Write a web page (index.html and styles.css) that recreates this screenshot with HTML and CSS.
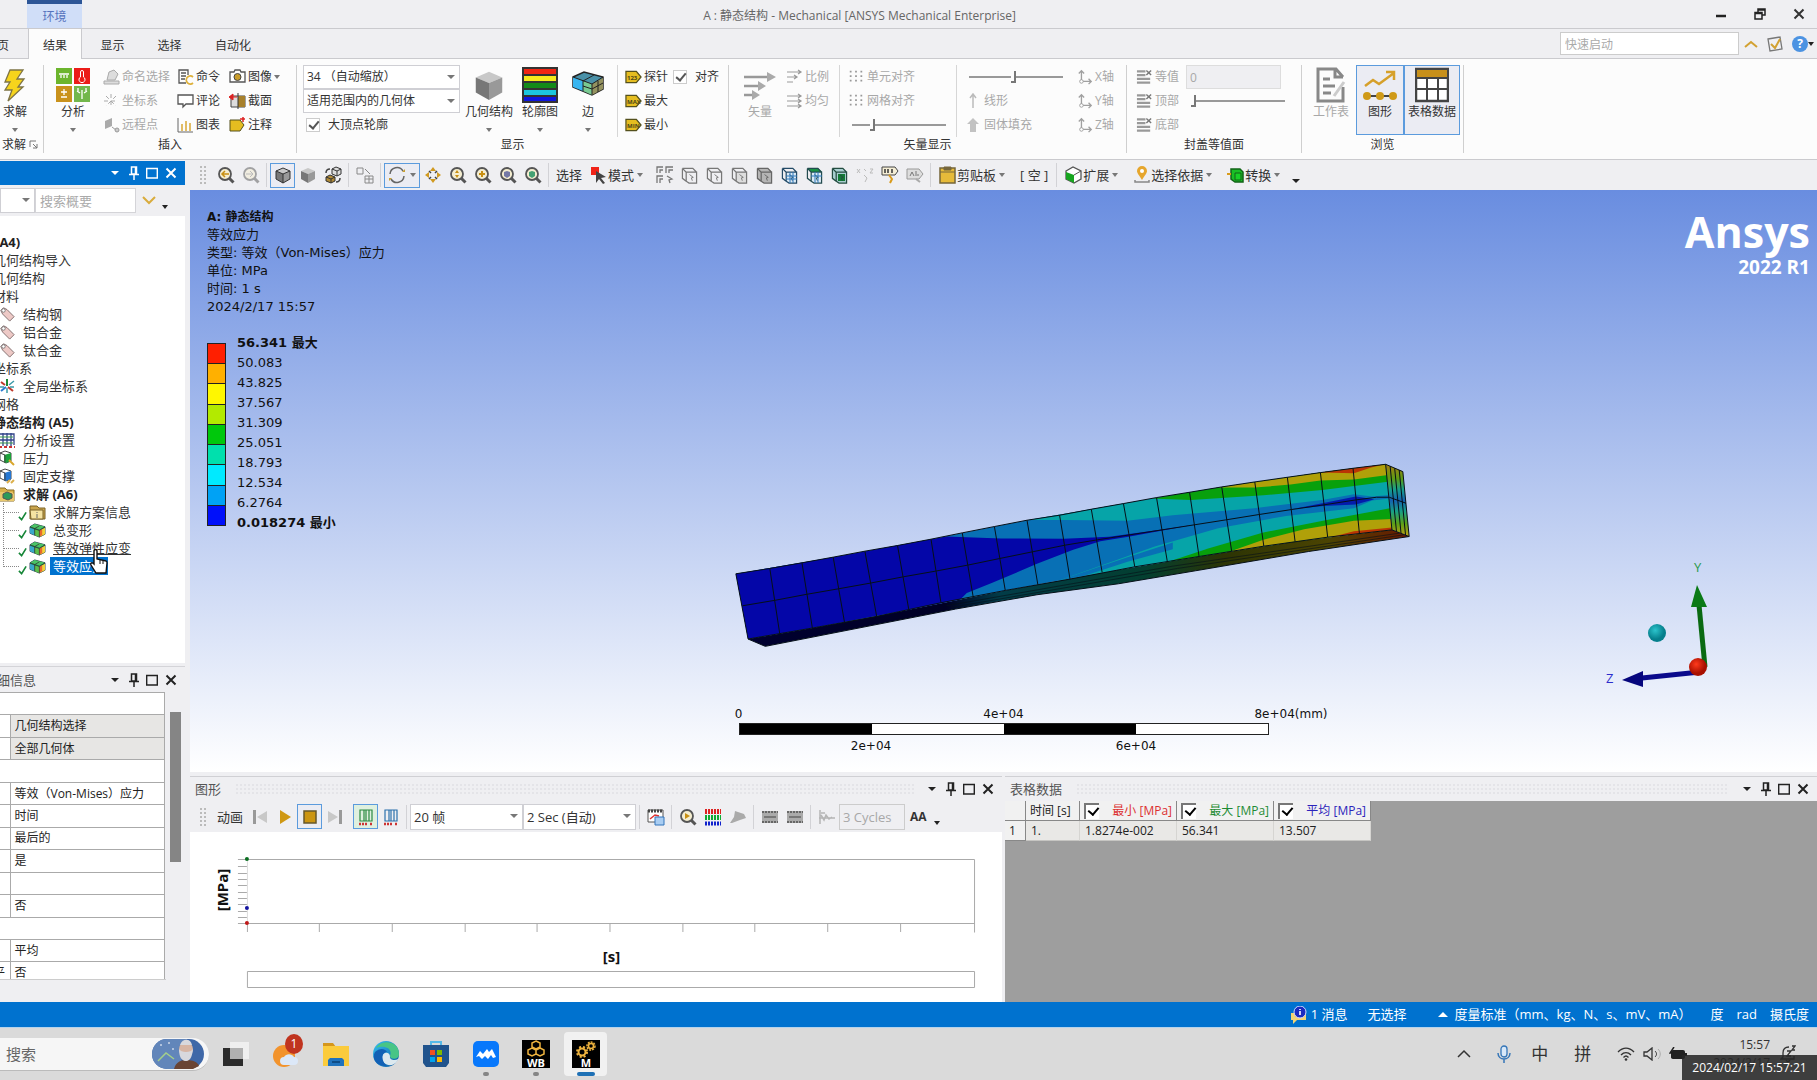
FILE: index.html
```html
<!DOCTYPE html>
<html lang="zh-CN">
<head>
    <meta charset="UTF-8">
    <meta name="viewport" content="width=device-width, initial-scale=1.0">
    <title>A : 静态结构 - Mechanical</title>
    <link rel="stylesheet" href="styles.css">
</head>
<body>
    <!-- shared icon shapes -->
    <svg class="defs" aria-hidden="true">
        <defs>
            <linearGradient id="gEdge" x1="0" y1="0" x2="1" y2="1"><stop offset="0" stop-color="#35c1f1"/><stop offset="1" stop-color="#0c59a4"/></linearGradient>
            <radialGradient id="gCyan" cx=".4" cy=".35"><stop offset="0" stop-color="#2cc4cc"/><stop offset="1" stop-color="#057f8c"/></radialGradient>
            <radialGradient id="gRed" cx=".4" cy=".35"><stop offset="0" stop-color="#ff3a1c"/><stop offset="1" stop-color="#a80f00"/></radialGradient>
            <symbol id="pin" viewBox="0 0 10 14"><path d="M2.5 1h5v7h-5zM6.5 1v7M0 8.500h10M5 9v5" fill="none" stroke="currentColor" stroke-width="1.500"/></symbol>
            <symbol id="max" viewBox="0 0 12 12"><path d="M.7 1.500h10.600v9.500H.7z" fill="none" stroke="currentColor" stroke-width="1.400"/></symbol>
            <symbol id="close" viewBox="0 0 12 12"><path d="M1.500 1.500l9 9M10.500 1.500l-9 9" stroke="currentColor" stroke-width="2"/></symbol>
            <symbol id="lens" viewBox="0 0 18 18"><path d="M12 12l4.500 4.500" stroke="#555" stroke-width="3"/><circle cx="8" cy="8" r="6" fill="#f4edd0" stroke="#555" stroke-width="1.800"/></symbol>
            <symbol id="cube" viewBox="0 0 18 18"><path d="M2 5l7-3 7 3-7 3z" fill="#c8c8c8"/><path d="M2 5l7 3v9l-7-4z" fill="#777"/><path d="M16 5l-7 3v9l7-4z" fill="#999"/></symbol>
            <symbol id="wire" viewBox="0 0 18 18"><path d="M5.500 5.500h11V17h-8l-3-2zM1.500 1.500h11l4 4M1.500 1.500l4 4M1.500 1.500V12l4 3" fill="none" stroke="currentColor" stroke-width="1.300"/><path d="M9 8l4 3-2 .5 1 3" fill="none" stroke="currentColor"/></symbol>
            <symbol id="tag" viewBox="0 0 18 14"><path d="M1 1h11l5 6-5 6H1z" fill="#e5bd20" stroke="#54501d" stroke-width="1.300"/></symbol>
            <symbol id="tagpink" viewBox="0 0 18 18"><path d="M2 5l3-3 4 2 8 8-5 5-8-8z" fill="#edc9c6" stroke="#796464"/><circle cx="5" cy="5" r="2" fill="#fff" stroke="#777"/></symbol>
            <symbol id="result" viewBox="0 0 18 16"><path d="M1 4l5-3 11 3v8l-6 3-10-4z" fill="#198c53" stroke="#345"/><path d="M1 5l5 2v6l-5-2z" fill="#39a8cb"/><path d="M6 7l5 1v7l-5-2z" fill="#5cc04a"/><path d="M11 8l6-3v7l-6 3z" fill="#f0d33a"/><path d="M11 8l3-1.500V13l-3 1.500z" fill="#e8692e"/><path d="M1 4l5-3 11 3-6 3z" fill="#4ac465"/><path d="M6 6v7M1 4l10 4 6-4M11 8v7M6 6l5-3" fill="none" stroke="#333" stroke-width=".8"/></symbol>
            <symbol id="tick" viewBox="0 0 10 10"><path d="M1 6l3 3 5-8" fill="none" stroke="#168637" stroke-width="1.800"/></symbol>
            <symbol id="iso" viewBox="0 0 18 16"><path d="M1 2h9M1 6h9M1 10h14M1 14h14" stroke="#999" stroke-width="2.500"/><path d="M11 1l5 5M16 1l-5 5" stroke="#777" stroke-width="1.500"/></symbol>
            <symbol id="axis" viewBox="0 0 18 18"><path d="M5 14V2M2 5l3-3 3 3M6 14h10M13 11l3 3-3 3" fill="none" stroke="#a0a0a0" stroke-width="1.500"/><circle cx="5" cy="14" r="2" fill="#fff" stroke="#999"/></symbol>
            <symbol id="dots" viewBox="0 0 18 18"><path d="M2 3h2M8 3h2M14 3h2M2 8h2M8 8h2M14 8h2M2 13h2M8 13h2M14 13h2" stroke="#999" stroke-width="2"/></symbol>
            <symbol id="film" viewBox="0 0 18 16"><path d="M1 2h16v12H1z" fill="#aaa"/><path d="M1 3h16M1 13h16" stroke="#666" stroke-width="2" stroke-dasharray="2 1"/><path d="M3 8h12" stroke="#666" stroke-width="1.500"/></symbol>
            <symbol id="mesh" viewBox="0 0 18 18"><path d="M3 2h12v11H3zM7 2v11M9 2v11M12 2v11" fill="none" stroke="currentColor" stroke-width="1.200"/><path d="M2 16h9M13 16h3" stroke="#c33" stroke-width="2.500" stroke-dasharray="2 1"/></symbol>
        </defs>
    </svg>

    <header class="titlebar">
        <div class="context-tab">环境</div>
        <div class="title">A : 静态结构 - Mechanical [ANSYS Mechanical Enterprise]</div>
        <div class="window-buttons">
            <button type="button" aria-label="最小化"><svg width="12" height="12" viewBox="0 0 12 12"><path d="M1 8h10" stroke="#222" stroke-width="2.500"/></svg></button>
            <button type="button" aria-label="还原"><svg width="12" height="12" viewBox="0 0 12 12"><path d="M4 4V1h7v6H8M1 4.500h7v6.500H1zM1 5.500h7M4 2h7" fill="none" stroke="#222" stroke-width="1.500"/></svg></button>
            <button type="button" aria-label="关闭"><svg width="12" height="12"><use href="#close"/></svg></button>
        </div>
    </header>

    <nav class="tabs">
        <button type="button" class="tab tab-home">主页</button>
        <button type="button" class="tab tab-on">结果</button>
        <button type="button" class="tab">显示</button>
        <button type="button" class="tab">选择</button>
        <button type="button" class="tab">自动化</button>
        <div class="quick">
            <input type="text" class="quick-input" placeholder="快速启动" aria-label="快速启动">
            <button type="button" aria-label="折叠"><svg width="14" height="10" viewBox="0 0 14 10"><path d="M1 8l6-5 6 5" fill="none" stroke="#d2a132" stroke-width="2"/></svg></button>
            <button type="button" aria-label="选项"><svg width="16" height="16" viewBox="0 0 16 16"><path d="M1 3l12-2 2 12-12 2z" fill="none" stroke="#777" stroke-width="1.300"/><path d="M4 8l4 4 5-9" fill="none" stroke="#d2a132" stroke-width="2"/></svg></button>
            <button type="button" aria-label="帮助" class="help"><span>?</span><i class="caret dark"></i></button>
        </div>
    </nav>

    <section class="ribbon">
        <div class="group g-solve">
            <div class="group-body">
                <button type="button" class="big"><svg width="30" height="34" viewBox="0 0 30 34"><path d="M10 2h13l-6 9h7l-6 8h5L8 33l4-11H5l5-8H5z" fill="#f6d41c" stroke="#7e7446" stroke-width="1.300"/></svg>求解<i class="caret"></i></button>
            </div>
            <div class="group-name">求解 <svg width="9" height="9" viewBox="0 0 9 9"><path d="M1 7V1h6M4 4l4 4M8 4v4H4" fill="none" stroke="#777"/></svg></div>
        </div>

        <div class="group g-insert">
            <div class="group-body">
                <button type="button" class="big analyze"><svg width="34" height="34" viewBox="0 0 34 34"><path d="M0 0h16v16H0z" fill="#6cb52d"/><path d="M18 0h16v16H18z" fill="#eb1c18"/><path d="M0 18h16v16H0z" fill="#c9921c"/><path d="M18 18h16v16H18z" fill="#72b74b"/><path d="M3 6h10M5 7v3M8 7v3M11 7v3M5 24h6M8 21v6M5 29h6M21 23l3 2M31 23l-3 2M26 22v9M22 20v3M30 20v3" stroke="#fff" stroke-width="1.300"/><path d="M24.500 9V4a1.500 1.500 0 0 1 3 0v5a3 3 0 1 1-3 0z" fill="none" stroke="#fff"/></svg>分析<i class="caret"></i></button>
                <div class="stack off w74">
                    <button type="button"><svg width="17" height="16" viewBox="0 0 17 16"><path d="M1 12h15v3H1zM4 11l2-8 5-2 4 4-3 6z" fill="#ddd" stroke="#aaa"/></svg>命名选择</button>
                    <button type="button"><svg width="17" height="16" viewBox="0 0 17 16"><path d="M8 1v14M1 8h14M3 3l10 10M13 3L3 13" stroke="#aaa" stroke-dasharray="4 3"/></svg>坐标系</button>
                    <button type="button"><svg width="17" height="16" viewBox="0 0 17 16"><path d="M2 4l7-3v8l-7 3z" fill="#aaa"/><path d="M9 10l4 3" stroke="#999"/><circle cx="14" cy="13" r="2" fill="#ccc" stroke="#999"/></svg>远程点</button>
                </div>
                <div class="stack w52">
                    <button type="button"><svg width="17" height="16" viewBox="0 0 17 16"><path d="M9 14H2V1h9v5M4 4h5M4 7h5M4 10h4" fill="none" stroke="#555" stroke-width="1.300"/><path d="M16 8a4 4 0 1 0 0 6" fill="none" stroke="#deb13b" stroke-width="1.800"/></svg>命令</button>
                    <button type="button"><svg width="17" height="16" viewBox="0 0 17 16"><path d="M1 2h15v9H9l-3 3v-3H1z" fill="#fff" stroke="#555" stroke-width="1.300"/></svg>评论</button>
                    <button type="button"><svg width="17" height="16" viewBox="0 0 17 16"><path d="M1 1v14h15" fill="none" stroke="#666"/><path d="M5 14V7M9 14V4M13 14V6" stroke="#d7a735" stroke-width="1.500"/></svg>图表</button>
                </div>
                <div class="stack w60">
                    <button type="button"><svg width="17" height="16" viewBox="0 0 17 16"><path d="M1 3h4l1-2h5l1 2h4v10H1z" fill="#fff" stroke="#555" stroke-width="1.300"/><circle cx="8.500" cy="8" r="3.500" fill="#c99d2b" stroke="#444"/></svg>图像<i class="caret"></i></button>
                    <button type="button"><svg width="17" height="16" viewBox="0 0 17 16"><path d="M2 3h14v11H2z" fill="#ddd" stroke="#444"/><path d="M9 3h7v11H9z" fill="#a7802b"/><path d="M9 0v16" stroke="#333"/><path d="M0 4l4-3v6zM4 4h4" fill="#d22" stroke="#d22"/></svg>截面</button>
                    <button type="button"><svg width="17" height="16" viewBox="0 0 17 16"><path d="M1 3h10l4 5-4 6H1z" fill="#e5bd20" stroke="#54501d"/><path d="M14 0v5M11 2h5" stroke="#d22" stroke-width="1.500"/></svg>注释</button>
                </div>
            </div>
            <div class="group-name">插入</div>
        </div>

        <div class="group g-show">
            <div class="group-body">
                <div class="stack w160">
                    <span class="select"><select aria-label="缩放"><option>34 （自动缩放）</option></select></span>
                    <span class="select"><select aria-label="范围"><option>适用范围内的几何体</option></select></span>
                    <label class="check"><input type="checkbox" checked>大顶点轮廓</label>
                </div>
                <button type="button" class="big w50"><svg width="34" height="34" viewBox="0 0 18 18"><use href="#cube"/></svg>几何结构<i class="caret"></i></button>
                <button type="button" class="big w50"><svg width="36" height="36" viewBox="0 0 36 36"><path d="M0 0h36v36H0z" fill="#333"/><path d="M2 2h32v5H2z" fill="#f22613"/><path d="M2 9h32v5H2z" fill="#f7ea1c"/><path d="M2 16h32v5H2z" fill="#138a18"/><path d="M2 23h32v5H2z" fill="#1cc7df"/><path d="M2 30h32v4H2z" fill="#1016dd"/></svg>轮廓图<i class="caret"></i></button>
                <button type="button" class="big w44"><svg width="34" height="34" viewBox="0 0 34 34"><path d="M2 9l11-5 19 5v12l-11 6L2 19z" fill="#4a91a8" stroke="#222" stroke-width="1.500"/><path d="M2 9l10 4v10L2 19z" fill="#38b5f0"/><path d="M12 13l9 3v11l-9-4z" fill="#79ca92"/><path d="M21 16l11-6v11l-11 6z" fill="#94925f"/><path d="M2 9l19 7 11-7M12 13v10M21 16v11M12 13l11-6M27 13v11M12 18l9 3 11-6" fill="none" stroke="#222"/></svg>边<i class="caret"></i></button>
                <div class="divider"></div>
                <div class="stack w46">
                    <button type="button"><svg width="17" height="14"><use href="#tag"/><text x="2" y="10" class="tag-text">123</text></svg>探针</button>
                    <button type="button"><svg width="17" height="14"><use href="#tag"/><text x="2" y="10" class="tag-text">MAX</text></svg>最大</button>
                    <button type="button"><svg width="17" height="14"><use href="#tag"/><text x="2" y="10" class="tag-text">MIN</text></svg>最小</button>
                </div>
                <div class="stack"><label class="check near"><input type="checkbox" checked>对齐</label></div>
            </div>
            <div class="group-name">显示</div>
        </div>

        <div class="group g-vector off">
            <div class="group-body">
                <button type="button" class="big w50"><svg width="32" height="34" viewBox="0 0 32 34"><path d="M0 9h24M0 18h14M0 27h8" stroke="#999" stroke-width="2.500"/><path d="M23 4l9 5-9 5zM14 13l8 5-8 5zM8 22l8 5-8 5z" fill="#aaa"/></svg>矢量</button>
                <div class="stack w46">
                    <button type="button"><svg width="17" height="16" viewBox="0 0 17 16"><path d="M1 3h14M12 1l3 2-3 2M1 8h10M8 6l3 2-3 2M1 13h6" fill="none" stroke="#999" stroke-width="1.200"/></svg>比例</button>
                    <button type="button"><svg width="17" height="16" viewBox="0 0 17 16"><path d="M1 3h14M12 1l3 2-3 2M1 8h14M12 6l3 2-3 2M1 13h14M12 11l3 2-3 2" fill="none" stroke="#999" stroke-width="1.200"/></svg>均匀</button>
                </div>
                <div class="divider"></div>
                <div class="stack w102">
                    <button type="button"><svg width="18" height="16"><use href="#dots"/></svg>单元对齐</button>
                    <button type="button"><svg width="18" height="16"><use href="#dots"/></svg>网格对齐</button>
                    <input type="range" aria-label="矢量密度" min="0" max="100" value="20">
                </div>
                <div class="divider"></div>
                <div class="stack w112">
                    <input type="range" aria-label="矢量长度" min="0" max="100" value="47">
                    <button type="button"><svg width="18" height="16" viewBox="0 0 18 16"><path d="M9 15V2M6 5l3-4 3 4" fill="none" stroke="#bbb" stroke-width="1.500"/></svg>线形</button>
                    <button type="button"><svg width="18" height="16" viewBox="0 0 18 16"><path d="M9 1l6 6h-3v8H6V7H3z" fill="#c2c2c2"/></svg>固体填充</button>
                </div>
                <div class="stack">
                    <button type="button"><svg width="16" height="18"><use href="#axis"/></svg>X轴</button>
                    <button type="button"><svg width="16" height="18"><use href="#axis"/></svg>Y轴</button>
                    <button type="button"><svg width="16" height="18"><use href="#axis"/></svg>Z轴</button>
                </div>
            </div>
            <div class="group-name">矢量显示</div>
        </div>

        <div class="group g-iso off">
            <div class="group-body">
                <div class="stack w50">
                    <button type="button"><svg width="17" height="16"><use href="#iso"/></svg>等值</button>
                    <button type="button"><svg width="17" height="16"><use href="#iso"/></svg>顶部</button>
                    <button type="button"><svg width="17" height="16"><use href="#iso"/></svg>底部</button>
                </div>
                <div class="stack w104">
                    <input type="text" class="iso-value" value="0" aria-label="等值" disabled>
                    <input type="range" aria-label="等值位置" min="0" max="100" value="0">
                </div>
            </div>
            <div class="group-name">封盖等值面</div>
        </div>

        <div class="group g-browse">
            <div class="group-body">
                <button type="button" class="big w50 off"><svg width="34" height="36" viewBox="0 0 34 36"><path d="M29 20v14H4V2h18l7 8M21 2v8h8M9 12h7M9 19h12M9 26h8" fill="none" stroke="#888" stroke-width="3"/><path d="M20 29l10-14" stroke="#ccc" stroke-width="3"/></svg>工作表</button>
                <button type="button" class="big w48 picked"><svg width="34" height="36" viewBox="0 0 34 36"><path d="M2 19l8-6 6 4L31 6M23 5h8v8" fill="none" stroke="#d6a02a" stroke-width="2.500"/><path d="M3 29h28" stroke="#444" stroke-width="2"/><g fill="#cf9a18"><circle cx="4" cy="29" r="4"/><circle cx="17" cy="29" r="4"/><circle cx="30" cy="29" r="4"/></g></svg>图形</button>
                <button type="button" class="big w56 picked"><svg width="34" height="36" viewBox="0 0 34 36"><path d="M1 2h32v32H1z" fill="#fff" stroke="#444" stroke-width="2.500"/><path d="M2 3h30v7H2z" fill="#c8901a"/><path d="M1 11h32M1 22h32M12 11v23M23 11v23" stroke="#444" stroke-width="2"/></svg>表格数据</button>
            </div>
            <div class="group-name">浏览</div>
        </div>
    </section>

    <main class="work">
        <aside class="side">
            <div class="caption caption-blue">
                <span class="caption-tools"><i class="caret"></i><svg width="10" height="14"><use href="#pin"/></svg><svg width="12" height="12"><use href="#max"/></svg><svg width="12" height="12"><use href="#close"/></svg></span>
            </div>
            <div class="finder">
                <span class="select finder-select"><select aria-label="筛选"><option></option></select></span>
                <input type="text" class="finder-input" placeholder="搜索概要" aria-label="搜索概要">
                <svg width="14" height="9" viewBox="0 0 14 9"><path d="M1 1l6 6 6-6" fill="none" stroke="#d9ac3d" stroke-width="2"/></svg>
                <i class="caret dark low"></i>
            </div>
            <div class="tree">
                <div class="node top bold brief">(A4)</div>
                <div class="node top">几何结构导入</div>
                <div class="node top">几何结构</div>
                <div class="node top">材料</div>
                <div class="node"><svg width="16" height="16"><use href="#tagpink"/></svg>结构钢</div>
                <div class="node"><svg width="16" height="16"><use href="#tagpink"/></svg>铝合金</div>
                <div class="node"><svg width="16" height="16"><use href="#tagpink"/></svg>钛合金</div>
                <div class="node top">坐标系</div>
                <div class="node"><svg width="16" height="16" viewBox="0 0 16 16"><path d="M8 8V1" stroke="#1a8a35" stroke-width="2"/><path d="M9 9l5 4M2 4l4 3" stroke="#c0392b" stroke-width="2"/><path d="M7 9l-5 4" stroke="#2a7ad0" stroke-width="2"/><path d="M10 7l5-4M8 10v5M1 9h4M11 9h4" stroke="#3a9aa8" stroke-width="1.500"/></svg>全局坐标系</div>
                <div class="node top">网格</div>
                <div class="node top bold">静态结构 (A5)</div>
                <div class="node"><svg width="16" height="16" viewBox="0 0 16 16"><path d="M1 2h14v11M4 1v13M8 1v13M12 1v13M1 8h14" fill="none" stroke="#33468a" stroke-width="1.300"/><path d="M1 5h13M1 11h13" stroke="#3a9a4a"/><path d="M0 15h16" stroke="#c33" stroke-width="2" stroke-dasharray="3 2"/></svg>分析设置</div>
                <div class="node"><svg width="16" height="16" viewBox="0 0 16 16"><path d="M1 3l5-2 6 2v8l-5 2-6-3z" fill="#fff" stroke="#444"/><path d="M5 5l7-2v8l-5 2-2-1z" fill="#1ca33a"/><path d="M1 3l5 2v8" fill="none" stroke="#444"/><path d="M15 15l-5-5" stroke="#d9a62b" stroke-width="2"/></svg>压力</div>
                <div class="node"><svg width="16" height="16" viewBox="0 0 16 16"><path d="M1 3l5-2 6 2v8l-5 2-6-3z" fill="#fff" stroke="#444"/><path d="M5 5l7-2v8l-5 2-2-1z" fill="#2577d2"/><path d="M1 3l5 2v8" fill="none" stroke="#444"/><path d="M8 15l3-3M12 15l3-3" stroke="#dcb04c" stroke-width="2"/></svg>固定支撑</div>
                <div class="node bold"><svg width="16" height="16" viewBox="0 0 16 16"><path d="M0 2h6l2 2h7v11H0z" fill="#d9b04a" stroke="#8a6d22"/><path d="M0 6h13l2 2v7H0z" fill="#e9c96e"/><path d="M4 8l4-2 5 2v4l-4 2-5-2z" fill="#2c9a5a" stroke="#555"/></svg>求解 (A6)</div>
                <div class="leaves">
                    <div class="node leaf"><svg class="ok" width="9" height="10"><use href="#tick"/></svg><svg width="17" height="16" viewBox="0 0 17 16"><path d="M1 2h7l2 2h6v11H1z" fill="#c9a54d" stroke="#7a6228"/><path d="M1 6h13v9H2z" fill="#f5e3a2" stroke="#7a6228"/><path d="M8 8v1M8 10v4" stroke="#666"/></svg>求解方案信息</div>
                    <div class="node leaf"><svg class="ok" width="9" height="10"><use href="#tick"/></svg><svg width="17" height="15"><use href="#result"/></svg>总变形</div>
                    <div class="node leaf"><svg class="ok" width="9" height="10"><use href="#tick"/></svg><svg width="17" height="15"><use href="#result"/></svg><span class="hot">等效弹性应变</span></div>
                    <div class="node leaf"><svg class="ok" width="9" height="10"><use href="#tick"/></svg><svg width="17" height="15"><use href="#result"/></svg><span class="selected">等效应力</span></div>
                    <svg class="hand" width="18" height="25" viewBox="0 0 18 25"><path d="M4 2c0-2 3-2 3 0v8l9 2c1 0 1 1 1 2l-1 10H6L1 16c-1-2 1-3 3-1z" fill="#fff" stroke="#111" stroke-width="1.400"/><path d="M10 11v4M13 12v3" stroke="#111"/></svg>
                </div>
            </div>
            <div class="caption caption-details">
                <span class="caption-name clipped">详细信息</span>
                <span class="caption-tools"><i class="caret dark"></i><svg width="10" height="14"><use href="#pin"/></svg><svg width="12" height="12"><use href="#max"/></svg><svg width="12" height="12"><use href="#close"/></svg></span>
            </div>
            <div class="details">
                <div class="details-view">
                    <table class="props">
                        <colgroup><col class="key"><col></colgroup>
                        <tr><td colspan="2"></td></tr>
                        <tr><td></td><td class="gray">几何结构选择</td></tr>
                        <tr><td></td><td class="gray">全部几何体</td></tr>
                        <tr><td colspan="2"></td></tr>
                        <tr><td></td><td>等效（Von-Mises）应力</td></tr>
                        <tr><td></td><td>时间</td></tr>
                        <tr><td></td><td>最后的</td></tr>
                        <tr><td></td><td>是</td></tr>
                        <tr><td></td><td></td></tr>
                        <tr><td></td><td>否</td></tr>
                        <tr><td colspan="2"></td></tr>
                        <tr><td></td><td>平均</td></tr>
                        <tr><td class="cut">平</td><td>否</td></tr>
                    </table>
                </div>
                <div class="scroll"><div class="thumb"></div></div>
            </div>
        </aside>

        <section class="stage">
            <div class="toolbar">
                <i class="grip"></i>
                <button type="button" class="tool" aria-label="上一视图"><svg width="18" height="18"><use href="#lens"/><path d="M12 8H5M8 5L5 8l3 3" fill="none" stroke="#c88f12" stroke-width="1.500"/></svg></button>
                <button type="button" class="tool off" aria-label="下一视图"><svg width="18" height="18" opacity=".5"><use href="#lens"/><path d="M4 8h7M8 5l3 3-3 3" fill="none" stroke="#888"/></svg></button>
                <i class="bar"></i>
                <button type="button" class="tool picked" aria-label="带边着色"><svg width="18" height="18"><use href="#cube"/><path d="M2 5l7-3 7 3-7 3zM2 5v8l7 4 7-4V5M9 8v9" fill="none" stroke="#333"/></svg></button>
                <button type="button" class="tool" aria-label="着色"><svg width="18" height="18"><use href="#cube"/></svg></button>
                <button type="button" class="tool" aria-label="旋转模型"><svg width="18" height="18" viewBox="0 0 18 18"><path d="M8 3l4-2 5 2v5l-4 2-5-2z" fill="#ddd" stroke="#333"/><path d="M2 11l4-2 5 2v4l-4 2-5-2z" fill="#b08a36" stroke="#333"/><path d="M8 3l5 2v5M13 5l4-2M2 11l5 2v4M7 13l4-2" fill="none" stroke="#333"/><path d="M2 7c0-3 2-4 4-4M16 12c0 3-2 4-4 4" fill="none" stroke="#444" stroke-width="1.500"/></svg></button>
                <i class="bar"></i>
                <button type="button" class="tool" aria-label="框选"><svg width="18" height="18" viewBox="0 0 18 18"><path d="M1 2h6v6H1zM9 10h8v7H9zM13 10v7M9 13h8M9 3l5 5" fill="none" stroke="#888"/></svg></button>
                <i class="bar"></i>
                <button type="button" class="tool picked wide" aria-label="旋转"><svg width="18" height="18" viewBox="0 0 18 18"><path d="M2 8a7 7 0 0 1 13-3M16 10a7 7 0 0 1-13 3" fill="none" stroke="#666" stroke-width="1.500"/><path d="M14 6h3V3zM4 12H1v3z" fill="#c9a032"/></svg><i class="caret"></i></button>
                <button type="button" class="tool" aria-label="平移"><svg width="18" height="18" viewBox="0 0 18 18"><g fill="#d19a20"><path d="M9 1l3 4H6zM9 17l3-4H6zM1 9l4-3v6zM17 9l-4-3v6z"/></g><path d="M5 5l2 2M13 5l-2 2M5 13l2-2M13 13l-2-2" stroke="#444" stroke-width="1.500"/></svg></button>
                <button type="button" class="tool" aria-label="缩放"><svg width="18" height="18"><use href="#lens"/><path d="M8 4l2 3H6zM8 12l2-3H6z" fill="#c88f12"/></svg></button>
                <button type="button" class="tool" aria-label="放大"><svg width="18" height="18"><use href="#lens"/><path d="M8 5v6M5 8h6" stroke="#c88f12" stroke-width="2"/></svg></button>
                <button type="button" class="tool" aria-label="适应窗口"><svg width="18" height="18"><use href="#lens"/><path d="M5 6l3-1 3 1v4l-3 2-3-2z" fill="#7579a5"/></svg></button>
                <button type="button" class="tool" aria-label="适应所选"><svg width="18" height="18"><use href="#lens"/><path d="M5 6l3-1 3 1v4l-3 2-3-2z" fill="#45a173"/></svg></button>
                <i class="bar"></i>
                <span class="word">选择</span>
                <button type="button" class="tool-text mode"><svg width="18" height="18" viewBox="0 0 18 18"><path d="M1 1h8v8H1z" fill="#f02318"/><path d="M6 5l10 6-5 1 4 5-2 1-4-5-3 4z" fill="#444"/></svg>模式<i class="caret"></i></button>
                <button type="button" class="tool" aria-label="智能选择"><svg width="18" height="18" viewBox="0 0 18 18"><path d="M1 7V1h6M4 7V4h3M10 7V1h7M13 7V4h4M1 17v-7h6M4 17v-4h3M11 10l5 3-3 1 1 3" fill="none" stroke="#777" stroke-width="1.300"/></svg></button>
                <button type="button" class="tool" aria-label="点"><svg width="17" height="17" color="#777"><use href="#wire"/></svg></button>
                <button type="button" class="tool" aria-label="边"><svg width="17" height="17" color="#777"><use href="#wire"/></svg></button>
                <button type="button" class="tool" aria-label="面"><svg width="17" height="17" color="#777"><path d="M5 5h11v11H5z" fill="#ddd"/><use href="#wire"/></svg></button>
                <button type="button" class="tool" aria-label="体"><svg width="17" height="17" color="#666"><path d="M1 1h11l4 4v11H7l-6-4z" fill="#b5b5b5"/><use href="#wire"/></svg></button>
                <button type="button" class="tool" aria-label="节点"><svg width="17" height="17" color="#234a66"><path d="M5 5h11v11H5z" fill="#dbeaf5"/><use href="#wire"/><path d="M5 9h11M5 12h11M9 5v11M12 5v11" stroke="#2e78bb"/></svg></button>
                <button type="button" class="tool" aria-label="单元面"><svg width="17" height="17" color="#244c50"><path d="M1 1h11l4 4H5z" fill="#1a9245"/><path d="M5 5h11v11H5z" fill="#dbeaf5"/><use href="#wire"/><path d="M5 9h11M9 5v11M12 5v11" stroke="#2e78bb"/></svg></button>
                <button type="button" class="tool" aria-label="单元"><svg width="17" height="17" color="#244c40"><path d="M1 1h11l4 4v11H7l-6-4z" fill="#a9cfd0"/><path d="M7 7h7v7H7z" fill="#127a35"/><use href="#wire"/></svg></button>
                <button type="button" class="tool" aria-label="坐标"><svg width="18" height="18" viewBox="0 0 18 18"><path d="M1 3l3 4M4 3L1 7M8 3l2 2M14 3h3l-3 4h3M8 9l3 3-2 4" fill="none" stroke="#bbb"/></svg></button>
                <button type="button" class="tool" aria-label="探测"><svg width="18" height="18" viewBox="0 0 18 18"><path d="M1 1h13l3 4-3 4H1z" fill="#f5eed5" stroke="#444"/><path d="M4 3v4M7 3v4M11 3v4" stroke="#333" stroke-width="1.500"/><path d="M8 9l3 4-2 4" stroke="#d99b1c" stroke-width="2" fill="none"/></svg></button>
                <button type="button" class="tool" aria-label="标签"><svg width="18" height="18" viewBox="0 0 18 18"><path d="M1 3h12l4 5-4 5H1z" fill="#ddd" stroke="#999"/><path d="M4 10l2-4 2 4M10 5v5M12 8v2" stroke="#777" fill="none"/><path d="M10 13l4 3" stroke="#aaa" stroke-width="2"/></svg></button>
                <i class="bar"></i>
                <button type="button" class="tool-text"><svg width="18" height="18" viewBox="0 0 18 18"><path d="M1 2h15v15H1z" fill="#e6ba3a" stroke="#75663a" stroke-width="1.500"/><path d="M5 1h7v3H5zM1 6h15" fill="#76663c" stroke="#76663c"/></svg>剪贴板<i class="caret"></i></button>
                <button type="button" class="tool-text empty">[ 空 ]</button>
                <i class="bar"></i>
                <button type="button" class="tool-text"><svg width="18" height="18" viewBox="0 0 18 18"><path d="M1 5l7-4 8 4v8l-7 4-8-4z" fill="#fff" stroke="#555" stroke-width="1.300"/><path d="M1 6l8 3v8l-8-4z" fill="#17a51f"/><path d="M9 9l7-4" stroke="#555"/></svg>扩展<i class="caret"></i></button>
                <button type="button" class="tool-text pad"><svg width="18" height="18" viewBox="0 0 18 18"><path d="M9 14C6 9 4 7 4 5a5 5 0 0 1 10 0c0 2-2 4-5 9z" fill="#e6a62d"/><circle cx="9" cy="5" r="2" fill="#fff"/><path d="M2 14v2h14v-2" fill="none" stroke="#888" stroke-width="1.500"/></svg>选择依据<i class="caret"></i></button>
                <button type="button" class="tool-text pad"><svg width="18" height="18" viewBox="0 0 18 18"><path d="M4 3h9l3 3v10H8l-4-3z" fill="#19bf25" stroke="#126317" stroke-width="1.500"/><path d="M8 7h6v7H8z" fill="#18d026" stroke="#126317"/><path d="M0 8h4" stroke="#d99b1c" stroke-width="2"/></svg>转换<i class="caret"></i></button>
                <i class="caret dark low end"></i>
            </div>

            <!-- 3D view -->
            <div class="view">
                <div class="legend">
                    <p class="strong">A: 静态结构</p>
                    <p>等效应力</p>
                    <p>类型: 等效（Von-Mises）应力</p>
                    <p>单位: MPa</p>
                    <p>时间: 1 s</p>
                    <p>2024/2/17 15:57</p>
                    <div class="bands">
                        <div class="band-colors"><i class="c1"></i><i class="c2"></i><i class="c3"></i><i class="c4"></i><i class="c5"></i><i class="c6"></i><i class="c7"></i><i class="c8"></i><i class="c9"></i></div>
                        <div class="band-values"><b>56.341 最大</b><span>50.083</span><span>43.825</span><span>37.567</span><span>31.309</span><span>25.051</span><span>18.793</span><span>12.534</span><span>6.2764</span><b>0.018274 最小</b></div>
                    </div>
                </div>
                <div class="brand"><div class="brand-name">Ansys</div><div class="brand-version">2022 R1</div></div>
                <svg class="beam" viewBox="0 0 1568 640" preserveAspectRatio="none">
                    <defs>
                        <clipPath id="face"><path d="M35 402L250 352 466 298 678 241 891 191 1108 141 1326 98 1470 73 1484 270 1270 305 1058 350 844 398 630 452 417 510 204 565 62 598z"/></clipPath>
                        <linearGradient id="under" x1="0" x2="1" y1="0" y2="0"><stop offset="0" stop-color="#000030"/><stop offset=".3" stop-color="#000025"/><stop offset=".38" stop-color="#023c48"/><stop offset=".6" stop-color="#033f30"/><stop offset=".72" stop-color="#2c3404"/><stop offset=".88" stop-color="#4c4402"/><stop offset="1" stop-color="#6a1800"/></linearGradient>
                        <linearGradient id="end" x1="0" x2="0" y1="0" y2="1"><stop offset="0" stop-color="#a87c10"/><stop offset=".2" stop-color="#5d9c14"/><stop offset=".35" stop-color="#16a08c"/><stop offset=".5" stop-color="#1560b0"/><stop offset=".65" stop-color="#18a088"/><stop offset=".82" stop-color="#5ba018"/><stop offset="1" stop-color="#c2a014"/></linearGradient>
                    </defs>
                    <path d="M62 598L204 565 417 510 630 452 844 398 1058 350 1270 305 1484 270 1522 290 1300 335 1050 393 880 432 700 465 520 508 100 620z" fill="url(#under)"/>
                    <path d="M1470 73L1508 95 1522 290 1484 270z" fill="url(#end)"/>
                    <g clip-path="url(#face)">
                        <path d="M0 0h1568v640H0z" fill="#0870b5"/>
                        <path d="M0 300L466 298 500 290 620 296 760 297 860 291 980 268 1050 254 905 290 840 304 780 330 700 372 600 430 545 460 515 500 400 640H0z" fill="#0406a8"/>
                        <path d="M670 240L760 240 900 243 1000 226 1180 205 1330 180 1400 163 1440 170 1480 165V60H800z" fill="#06a4a8"/>
                        <path d="M950 176L1040 180 1200 166 1330 150 1400 138 1480 125V60H1000z" fill="#08a00c"/>
                        <path d="M1095 143L1180 143 1260 134 1326 122 1400 119 1480 104V60H1100z" fill="#b0a009"/>
                        <path d="M1330 98L1400 100 1440 82 1470 73H1330z" fill="#ba3504"/>
                        <path d="M720 436L840 378 960 320 1100 265 1250 228 1400 205 1440 182 1480 176V300L900 420z" fill="#06a4a8"/>
                        <path d="M720 436L800 398 900 352 1000 308 1000 328 900 366 800 410z" fill="#0870b5"/>
                        <path d="M980 370L1080 325 1200 278 1340 240 1480 205V300L1000 380z" fill="#08a00c"/>
                        <path d="M1120 338L1200 300 1290 268 1400 243 1484 237V290L1130 350z" fill="#b0a009"/>
                        <path d="M1340 295L1400 274 1490 262V290z" fill="#ba3504"/>
                        <path d="M1262 208L1333 189 1404 170 1445 178 1404 194 1333 198z" fill="#041bac"/>
                    </g>
                    <g class="edges">
                        <path d="M35 402L110 386 181 369 250 352 320 334 392 317 466 298 535 279 606 260 678 241 750 226 820 208 891 191 964 173 1037 157 1108 141 1181 126 1253 112 1326 98 1398 85 1470 73 1508 95 1522 290 1484 270 1342 292 1201 319 1058 350 916 381 773 418 630 452 488 489 346 530 204 565 62 598z"/>
                        <path d="M62 598L100 620 520 508 700 465 880 432 1050 393 1300 335 1522 290M1470 73L1484 270M1478 172L1515 190"/>
                        <path d="M50 498L120 482 190 464 262 447 332 430 405 411 476 394 547 376 618 356 690 336 762 316 833 300 905 285 976 270 1047 255 1117 240 1190 224 1262 209 1333 195 1404 180 1450 172 1478 172"/>
                        <path d="M110 386L132 583M181 369L204 565M250 352L275 548M320 334L346 530M392 317L417 510M466 298L488 489M535 279L559 470M606 260L630 452M678 241L702 435M750 226L773 418M820 208L844 398M891 191L916 381M964 173L988 366M1037 157L1058 350M1108 141L1130 334M1181 126L1201 319M1253 112L1270 305M1326 98L1342 292M1398 85L1412 280M1480 79L1494 275M1490 85L1504 280M1500 90L1514 286"/>
                        <path d="M500 498L1000 379 1500 280M510 503L1010 386 1510 285" opacity=".6"/>
                    </g>
                </svg>
                <div class="ruler">
                    <div class="ruler-top"><span>0</span><span>4e+04</span><span class="unit">8e+04(mm)</span></div>
                    <div class="ruler-bar"><i></i><i></i><i></i><i></i></div>
                    <div class="ruler-bottom"><span>2e+04</span><span>6e+04</span></div>
                </div>
                <svg class="triad" width="120" height="140" viewBox="0 0 120 140">
                    <path d="M99 50l6 62" stroke="#0a6a12" stroke-width="5"/><path d="M97 30L91 52h16z" fill="#0a7a16"/>
                    <path d="M100 117L42 123" stroke="#0a0a8c" stroke-width="5"/><path d="M22 125l21-9v16z" fill="#06067d"/>
                    <circle cx="98" cy="112" r="9" fill="url(#gRed)"/><circle cx="57" cy="78" r="9" fill="url(#gCyan)"/>
                    <text x="94" y="17" fill="#2b9a4c">Y</text><text x="6" y="128" fill="#2c2ccc">Z</text>
                </svg>
            </div>

            <div class="bottom">
                <section class="graph">
                    <div class="caption">
                        <span class="caption-name">图形</span><span class="caption-dots"></span>
                        <span class="caption-tools"><i class="caret dark"></i><svg width="10" height="14"><use href="#pin"/></svg><svg width="12" height="12"><use href="#max"/></svg><svg width="12" height="12"><use href="#close"/></svg></span>
                    </div>
                    <div class="toolbar">
                        <i class="grip"></i>
                        <span class="word">动画</span>
                        <button type="button" class="tool" aria-label="首帧"><svg width="16" height="16" viewBox="0 0 16 16"><path d="M1 1h3v14H1z" fill="#999"/><path d="M15 2v12L5 8z" fill="#c8c8c8"/></svg></button>
                        <button type="button" class="tool" aria-label="播放"><svg width="14" height="16" viewBox="0 0 14 16"><path d="M2 1l11 7-11 7z" fill="#cf9814"/></svg></button>
                        <button type="button" class="tool picked" aria-label="停止"><svg width="14" height="14" viewBox="0 0 14 14"><path d="M1 1h12v12H1z" fill="#cb9512" stroke="#66572c" stroke-width="1.500"/></svg></button>
                        <button type="button" class="tool" aria-label="末帧"><svg width="16" height="16" viewBox="0 0 16 16"><path d="M12 1h3v14h-3z" fill="#999"/><path d="M1 2v12l10-6z" fill="#c8c8c8"/></svg></button>
                        <button type="button" class="tool picked green" aria-label="分布"><svg width="18" height="18" color="#2c8a42"><use href="#mesh"/></svg></button>
                        <button type="button" class="tool" aria-label="结果集"><svg width="18" height="18" color="#2b71ac"><use href="#mesh"/></svg></button>
                        <i class="bar"></i>
                        <span class="select anim"><select aria-label="帧数"><option>20 帧</option></select></span>
                        <span class="select anim"><select aria-label="时长"><option>2 Sec (自动)</option></select></span>
                        <i class="bar"></i>
                        <button type="button" class="tool" aria-label="导出"><svg width="18" height="18" viewBox="0 0 18 18"><path d="M1 2h15v12H1z" fill="#fff" stroke="#555"/><path d="M1 3h15" stroke="#444" stroke-width="3" stroke-dasharray="2 1"/><path d="M3 11l5-4 4 1" stroke="#d33" fill="none" stroke-width="1.500"/><path d="M8 9h9v8H8z" fill="#a9cdf2" stroke="#3274bb"/></svg></button>
                        <i class="bar"></i>
                        <button type="button" class="tool" aria-label="缩放到"><svg width="18" height="18"><use href="#lens"/><path d="M6 5l5 3-5 3z" fill="#c88f12"/></svg></button>
                        <button type="button" class="tool" aria-label="色带"><svg width="18" height="18" viewBox="0 0 18 18"><path d="M1 3.500h16" stroke="#d22" stroke-width="5" stroke-dasharray="2 1"/><path d="M1 9.500h16" stroke="#1a3" stroke-width="5" stroke-dasharray="2 1"/><path d="M1 15.500h16" stroke="#12c" stroke-width="4" stroke-dasharray="2 1"/></svg></button>
                        <button type="button" class="tool" aria-label="更新"><svg width="18" height="18" viewBox="0 0 18 18"><path d="M1 15l4-6 1-6 9 3 2 4-6 2-8 3z" fill="#aaa"/></svg></button>
                        <i class="bar"></i>
                        <button type="button" class="tool" aria-label="影片"><svg width="18" height="16"><use href="#film"/></svg></button>
                        <button type="button" class="tool" aria-label="影片剪辑"><svg width="18" height="16"><use href="#film"/></svg></button>
                        <i class="bar"></i>
                        <button type="button" class="tool" aria-label="循环"><svg width="18" height="16" viewBox="0 0 18 16"><path d="M2 1v14M1 9h16M3 4h4M3 6l3 5 2-5 3 4 3-2" fill="none" stroke="#b5b5b5" stroke-width="1.500"/></svg></button>
                        <input type="text" class="cycles" value="3 Cycles" aria-label="循环次数" disabled>
                        <span class="aa">AA</span><i class="caret dark low"></i>
                    </div>
                    <div class="chart">
                        <svg viewBox="0 0 813 170" preserveAspectRatio="none">
                            <path d="M48 27.500h737.500v73M48 91.500h737.500M57.500 91v9M129.500 91v9M202.500 91v9M275.500 91v9M347.500 91v9M420.500 91v9M493.500 91v9M565.500 91v9M638.500 91v9M711.500 91v9M48 34.500h9M48 41.500h9M48 47.500h9M48 53.500h9M48 60.500h9M48 66.500h9M48 72.500h9M48 79.500h9M48 85.500h9M57.500 139.500h728v16h-728z" fill="none" stroke="#aaa"/>
                            <path d="M57.500 27v64" stroke="#ddd"/>
                            <circle cx="57" cy="27" r="2" fill="#0a6e20"/><circle cx="57" cy="76" r="2" fill="#1414a0"/><circle cx="57" cy="91" r="2" fill="#c01818"/>
                            <text x="422" y="130" text-anchor="middle">[s]</text>
                            <text transform="translate(38 58) rotate(-90)" text-anchor="middle">[MPa]</text>
                        </svg>
                    </div>
                </section>
                <section class="data">
                    <div class="caption">
                        <span class="caption-name">表格数据</span><span class="caption-dots"></span>
                        <span class="caption-tools"><i class="caret dark"></i><svg width="10" height="14"><use href="#pin"/></svg><svg width="12" height="12"><use href="#max"/></svg><svg width="12" height="12"><use href="#close"/></svg></span>
                    </div>
                    <div class="data-body">
                        <table class="grid">
                            <colgroup><col class="n"><col class="t"><col><col><col></colgroup>
                            <thead>
                                <tr>
                                    <th></th>
                                    <th>时间 [s]</th>
                                    <th><label class="red"><input type="checkbox" checked>最小 [MPa]</label></th>
                                    <th><label class="grn"><input type="checkbox" checked>最大 [MPa]</label></th>
                                    <th><label class="blu"><input type="checkbox" checked>平均 [MPa]</label></th>
                                </tr>
                            </thead>
                            <tbody>
                                <tr><th>1</th><td>1.</td><td>1.8274e-002</td><td>56.341</td><td>13.507</td></tr>
                            </tbody>
                        </table>
                    </div>
                </section>
            </div>
        </section>
    </main>

    <footer class="status">
        <span class="message"><svg width="18" height="18" viewBox="0 0 18 18"><path d="M1 7h15v7H7l-4 4v-4H1z" fill="#f3d474"/><circle cx="10" cy="6" r="6" fill="#1b2bc0" stroke="#cfd9ff"/><path d="M10 3v1M10 5v4" stroke="#fff" stroke-width="1.600"/></svg>1 消息</span>
        <span class="pick">无选择</span>
        <span class="units"><i class="up"></i>度量标准（mm、kg、N、s、mV、mA）</span>
        <span class="unit-angle">度</span>
        <span class="unit-rad">rad</span>
        <span>摄氏度</span>
    </footer>

    <div class="taskbar">
        <div class="search">
            <input type="text" placeholder="搜索" aria-label="搜索">
            <svg width="52" height="30" viewBox="0 0 52 30"><rect width="52" height="30" rx="15" fill="#3f68a8"/><path d="M0 15a15 15 0 0 1 15-15h20l-8 30H15A15 15 0 0 1 0 15z" fill="#6286ba"/><path d="M22 30c2-8 8-9 13-9s11 2 12 6l-6 3z" fill="#6a4434"/><circle cx="34" cy="10" r="7" fill="#d7b5a4"/><path d="M27 10c0 10 4 12 7 12s6-2 7-12c-2 4-12 4-14 0zM28 6c2-7 11-7 12 0" fill="#d8d8dd"/><path d="M6 22l8-8 8 6" stroke="#a4cf8a" fill="none" stroke-width="1.500"/><path d="M8 6h2M16 4h2M20 10h2" stroke="#fff"/></svg>
        </div>
        <div class="apps">
            <button type="button" class="app" aria-label="任务视图"><svg width="28" height="28" viewBox="0 0 28 28"><path d="M1 8h20v18H1z" fill="#2b2b2b"/><path d="M8 2h19v17H8z" fill="#f2f2f2" opacity=".85"/><path d="M8 8h13v11H8z" fill="#b0b0b0"/></svg></button>
            <button type="button" class="app" aria-label="天气"><svg width="28" height="28" viewBox="0 0 28 28"><circle cx="12" cy="16" r="11" fill="#f2932c"/><path d="M12 25h10a4 4 0 0 0 0-8 6 6 0 0 0-10 0 4 4 0 0 0 0 8z" fill="#dce8f8"/></svg><span class="badge">1</span></button>
            <button type="button" class="app" aria-label="文件资源管理器"><svg width="28" height="28" viewBox="0 0 28 28"><path d="M1 3h10l3 4H1z" fill="#d5961c"/><path d="M1 6h26v20H1z" fill="#fbcb3c"/><path d="M6 26v-6l2-2h12l2 2v6z" fill="#1f72bd"/><path d="M10 22h8" stroke="#0d4c87" stroke-width="2"/></svg></button>
            <button type="button" class="app" aria-label="Edge"><svg width="28" height="28" viewBox="0 0 28 28"><circle cx="14" cy="14" r="13" fill="url(#gEdge)"/><path d="M4 8C9-1 27 0 27 14c0 6-9 6-9 2 3-8-6-11-14-8z" fill="#48c586"/><path d="M18 16c-1-5-8-4-8 2 0 4 4 8 10 7 3-1 6-4 6-6-3 2-9 1-8-3z" fill="#dce9ef"/><path d="M3 12c5-5 11-3 12 0-5 0-7 8 0 14C5 27-1 19 3 12z" fill="#1261b5"/></svg></button>
            <button type="button" class="app" aria-label="商店"><svg width="28" height="28" viewBox="0 0 28 28"><path d="M9 6V2h10v4" fill="none" stroke="#55b9e8" stroke-width="2"/><path d="M1 5h26v18l-3 4H4l-3-4z" fill="#20538c"/><path d="M8 10h5v5H8z" fill="#f25022"/><path d="M15 10h5v5h-5z" fill="#7fba00"/><path d="M8 17h5v5H8z" fill="#00a4ef"/><path d="M15 17h5v5h-5z" fill="#ffb900"/></svg></button>
            <button type="button" class="app run" aria-label="会议"><svg width="26" height="26" viewBox="0 0 26 26"><rect width="26" height="26" rx="5" fill="#0878fb"/><path d="M3 16l4-6 3 3 4-5 2 3 3-3 4 8-3 1-2-3-3 4-3-3-3 3-3-3z" fill="#fff"/></svg></button>
            <button type="button" class="app run" aria-label="Workbench"><svg width="28" height="28" viewBox="0 0 28 28"><path d="M0 0h28v28H0z" fill="#000"/><path d="M14 1l4 2v4l-4 2-4-2V3zM10 8l4 2v4l-4 2-4-2v-4zM18 8l4 2v4l-4 2-4-2v-4z" fill="none" stroke="#eeb33e" stroke-width="1.500"/><text x="14" y="27" text-anchor="middle">WB</text></svg></button>
            <button type="button" class="app on" aria-label="Mechanical"><svg width="28" height="28" viewBox="0 0 28 28"><path d="M0 0h28v28H0z" fill="#000"/><g fill="none" stroke="#eeb33e"><circle cx="10" cy="12" r="3.500" stroke-width="2"/><circle cx="10" cy="12" r="5" stroke-width="2" stroke-dasharray="2 2"/><circle cx="19" cy="6" r="2.500" stroke-width="1.500"/><circle cx="19" cy="6" r="4" stroke-width="1.500" stroke-dasharray="2 1"/></g><text x="14" y="27" text-anchor="middle">M</text></svg></button>
        </div>
        <div class="tray">
            <svg width="14" height="10" viewBox="0 0 14 10"><path d="M1 8l6-6 6 6" fill="none" stroke="#333" stroke-width="1.500"/></svg>
            <svg width="14" height="18" viewBox="0 0 14 18"><rect x="4" y="1" width="6" height="11" rx="3" fill="#d8e8f8" stroke="#3576b8" stroke-width="1.300"/><path d="M1 8c0 8 12 8 12 0M7 14v4" fill="none" stroke="#3576b8" stroke-width="1.500"/></svg>
            <span class="ime">中</span>
            <span class="ime">拼</span>
            <span class="tray-set">
                <svg width="18" height="14" viewBox="0 0 18 14"><path d="M1 5c5-5 11-5 16 0M4 8c3-3 7-3 10 0M6.500 10.500c2-2 3-2 5 0" fill="none" stroke="#333" stroke-width="1.400"/><circle cx="9" cy="12.500" r="1.300" fill="#333"/></svg>
                <svg width="18" height="14" viewBox="0 0 18 14"><path d="M1 5h3l5-4v12L4 9H1z" fill="none" stroke="#333" stroke-width="1.300"/><path d="M12 4c2 2 2 4 0 6" fill="none" stroke="#333"/><path d="M15 2c3 3 3 7 0 10" fill="none" stroke="#aaa"/></svg>
                <svg width="18" height="14" viewBox="0 0 18 14"><rect x="2" y="3" width="14" height="9" rx="2" fill="#222"/><path d="M17 6v3" stroke="#222" stroke-width="2"/><path d="M5 0L1 6h3l-1 5" fill="none" stroke="#222" stroke-width="1.500"/></svg>
            </span>
            <span class="clock"><span>15:57</span><span>2024/2/17</span></span>
            <svg width="16" height="18" viewBox="0 0 16 18"><path d="M9 2C4 2 3 5 3 8v4l-2 2h13v-3M6 15c1 2 3 2 4 0" fill="none" stroke="#333" stroke-width="1.300"/><path d="M7 6h4l-4 5h4M12 1h3l-3 4h3" fill="none" stroke="#333" stroke-width="1.300"/></svg>
        </div>
        <div class="stamp">2024/02/17 15:57:21</div>
    </div>
</body>
</html>
```
FILE: styles.css
```css
* {
    box-sizing: border-box;
}

body {
    margin: 0;
    height: 100vh;
    min-height: 700px;
    display: flex;
    flex-direction: column;
    overflow: hidden;
    background: #efeff2;
    color: #333;
    font-family: "Open Sans", "Noto Sans CJK SC", sans-serif;
    font-size: 12px;
    line-height: 18px;
}

button, input, select {
    font: inherit;
    color: inherit;
    margin: 0;
}

button {
    background: none;
    border: 0;
    padding: 0;
    white-space: nowrap;
}

svg {
    flex-shrink: 0;
}

.defs {
    position: absolute;
    width: 0;
    height: 0;
}

.caret {
    display: inline-block;
    flex-shrink: 0;
    border: 3px solid transparent;
    border-top: 4px solid #777;
    border-bottom: 0;
}

.dark {
    border-top-color: #222;
}

.low {
    margin-top: 12px;
}

.off {
    color: #a8a8a8;
}

/* title bar and tabs */
.titlebar {
    height: 29px;
    display: flex;
    border-bottom: 1px solid #cacace;
}

.context-tab {
    width: 55px;
    margin-left: 27px;
    border-top: 4px solid #2c5597;
    background: #d0def8;
    color: #5673bd;
    text-align: center;
    line-height: 26px;
}

.title {
    flex: 1;
    padding-right: 78px;
    text-align: center;
    line-height: 32px;
    color: #666;
}

.window-buttons {
    display: flex;
    gap: 27px;
    align-items: center;
    padding-right: 12px;
}

.window-buttons button, .quick button {
    display: flex;
    align-items: center;
}

.tabs {
    height: 30px;
    display: flex;
    border-bottom: 1px solid #cacace;
}

.tab {
    padding: 0 16px;
    height: 31px;
    width: 57px;
    line-height: 34px;
}

.tab:last-of-type {
    width: 70px;
}

.tab-home {
    width: 28px;
    padding: 0;
    text-indent: -15px;
    overflow: hidden;
    text-align: left;
}

.tab-on {
    width: 54px;
    margin-right: 2px;
    padding: 0 14px;
    background: #fcfcfc;
    border: solid #cacace;
    border-width: 0 1px;
}

.quick {
    margin-left: auto;
    display: flex;
    gap: 9px;
    align-items: center;
    padding-right: 3px;
}

.quick-input {
    width: 179px;
    height: 23px;
    border: 1px solid #ccc;
    background: #fff;
    padding: 2px 4px 0;
    margin-right: -4px;
}

::placeholder {
    color: #aaa;
    opacity: 1;
}

.help span {
    width: 16px;
    height: 16px;
    border-radius: 50%;
    background: #4c93e2;
    color: #fff;
    font-weight: bold;
    line-height: 16px;
    text-align: center;
}

/* ribbon */
.ribbon {
    height: 101px;
    display: flex;
    background: #fcfcfc;
    border-bottom: 1px solid #cacace;
    overflow: hidden;
}

.group {
    height: 88px;
    margin-top: 6px;
    border-right: 1px solid #cfcfcf;
    display: flex;
    flex-direction: column;
    flex-shrink: 0;
}

.g-solve { width: 44px; }
.g-insert { width: 253px; }
.g-show { width: 432px; }
.g-vector { width: 398px; }
.g-iso { width: 175px; }
.g-browse { width: 162px; }

.group-body {
    flex: 1;
    height: 72px;
    display: flex;
}

.group-name {
    height: 16px;
    line-height: 16px;
    color: #333;
    text-align: center;
}

.g-solve .group-name {
    white-space: nowrap;
    text-align: left;
    padding-left: 2px;
}

.big {
    display: flex;
    flex-direction: column;
    align-items: center;
    height: 70px;
    padding-top: 2px;
}

.big svg {
    height: 36px;
}

.big .caret {
    margin-top: 7px;
}

.g-solve .big { width: 30px; }
.analyze { width: 50px; margin: 0 5px 0 4px; }
.w44 { width: 44px; }
.w46 { width: 46px; }
.w48 { width: 48px; }
.w50 { width: 50px; }
.w52 { width: 52px; }
.w56 { width: 56px; }
.w60 { width: 60px; }
.w74 { width: 74px; }
.w102 { width: 102px; }
.w104 { width: 104px; }
.w112 { width: 112px; }
.w160 { width: 160px; }

.picked {
    background: #ebecf3;
    border: 1px solid #5b9bdd;
}

.big.picked {
    padding-top: 1px;
}

.stack {
    display: flex;
    flex-direction: column;
    flex-shrink: 0;
}

.stack button, .check {
    height: 24px;
    display: flex;
    align-items: center;
    gap: 2px;
    white-space: nowrap;
}

.divider {
    width: 1px;
    height: 72px;
    background: #d6d6d6;
    margin: 0 6px;
}

.g-show .group-body {
    padding-left: 6px;
    gap: 1px;
}

.g-vector .group-body {
    padding-left: 6px;
    gap: 1px;
}

.g-iso .group-body {
    padding-left: 9px;
}

.g-browse .group-body {
    padding-left: 4px;
}

.select {
    position: relative;
    display: block;
    height: 23px;
}

.select::after {
    content: "";
    position: absolute;
    right: 5px;
    top: 10px;
    border: 4px solid transparent;
    border-top: 4px solid #777;
    border-bottom: 0;
    pointer-events: none;
}

.select select {
    width: 100%;
    height: 100%;
    appearance: none;
    border: 1px solid #cfcfd4;
    border-radius: 0;
    background: #fff;
    padding: 0 3px;
}

.stack .select {
    width: 157px;
    height: 24px;
}

.check input {
    appearance: none;
    width: 14px;
    height: 14px;
    margin: 0 6px 0 3px;
    border: 1px solid #ccc;
    background: #fff;
}

.near input {
    margin: 0 6px 0 1px;
}

.check input::before {
    content: "";
    display: block;
    width: 4px;
    height: 8px;
    margin: 0 4px;
    border: solid #555;
    border-width: 0 2px 2px 0;
    transform: rotate(40deg);
}

input[type="range"] {
    appearance: none;
    width: 94px;
    height: 24px;
    margin-left: 5px;
    background: linear-gradient(#999, #999) center / 100% 2px no-repeat;
}

input[type="range"]::-webkit-slider-thumb {
    appearance: none;
    width: 5px;
    height: 12px;
    border: solid #777;
    border-width: 0 2px 2px 0;
    background: #fcfcfc;
}

.iso-value {
    width: 95px;
    height: 24px;
    border: 1px solid #ddd;
    background: #efeff2;
    padding: 0 3px;
}

.tag-text {
    font-size: 6px;
    font-weight: bold;
    fill: #4d4618;
}

/* left side */
.work {
    flex: 1;
    min-height: 0;
    display: flex;
}

.side {
    width: 190px;
    flex-shrink: 0;
    padding: 1px 5px 0 0;
    display: flex;
    flex-direction: column;
    overflow: hidden;
}

.caption {
    height: 24px;
    display: flex;
    align-items: center;
    font-size: 13px;
    color: #555;
    flex-shrink: 0;
}

.caption-tools {
    margin-left: auto;
    margin-right: 8px;
    display: flex;
    gap: 7px;
    align-items: center;
    color: #222;
}

.caption .caret {
    border-width: 4px 4px 0;
    margin-right: 3px;
}

.caption-blue {
    background: #0072cf;
}

.caption-blue .caption-tools {
    color: #fff;
}

.caption-blue .caret {
    border-top-color: #fff;
}

.caption-dots {
    flex: 1;
    height: 12px;
    margin: 0 14px;
    background: radial-gradient(#e4e4e8 1px, transparent 1px) 0 0 / 4px 4px;
}

.clipped {
    margin-left: -16px;
}

.finder {
    height: 31px;
    display: flex;
    align-items: center;
    gap: 6px;
}

.finder-select {
    width: 35px;
    height: 25px;
    margin-right: -6px;
}

.finder-input {
    width: 101px;
    height: 25px;
    border: 1px solid #d4d4d8;
    background: #fff;
    padding: 0 4px;
    font-size: 13px;
}

.tree {
    flex: 1;
    min-height: 0;
    background: #fff;
    padding-top: 17px;
    font-size: 13px;
    overflow: hidden;
}

.node {
    height: 18px;
    display: flex;
    align-items: center;
    gap: 8px;
    white-space: nowrap;
    margin-left: -1px;
}

.top {
    margin-left: -7px;
}

.brief {
    margin-left: -5px;
}

.bold {
    font-weight: bold;
    color: #222;
}

.leaves {
    position: relative;
    margin-left: 3px;
    padding-left: 16px;
}

.leaves::before {
    content: "";
    position: absolute;
    left: 0;
    top: 0;
    height: 64px;
    border-left: 1px dotted #888;
}

.leaf {
    position: relative;
    gap: 7px;
}

.leaf::before {
    content: "";
    position: absolute;
    left: -15px;
    width: 16px;
    top: 9px;
    border-top: 1px dotted #888;
}

.leaf .ok {
    margin-top: 8px;
    margin-right: -5px;
}

.hot {
    text-decoration: underline;
}

.selected {
    background: #0072cf;
    color: #fff;
    padding: 0 3px;
    margin-left: -3px;
}

.hand {
    position: absolute;
    left: 87px;
    top: 46px;
}

.caption-details {
    height: 26px;
    border-top: 1px solid #d4d4d8;
    margin-top: 3px;
}

.details {
    height: 310px;
    display: flex;
}

.details-view {
    width: 166px;
    height: 288px;
    overflow: hidden;
    border-bottom: 1px solid #ccc;
}

.props {
    width: 165px;
    height: 293px;
    table-layout: fixed;
    border-collapse: collapse;
    background: #fff;
    color: #222;
}

.props .key {
    width: 10px;
}

.props td {
    height: 22px;
    padding: 0 4px;
    border: 1px solid #aaa;
    white-space: nowrap;
    line-height: 18px;
    overflow: hidden;
}

.props td:first-child {
    padding: 0;
    border-left: 0;
}

.props .gray {
    background: #e7e6e4;
}

.props .cut {
    text-indent: -7px;
}

.scroll {
    margin-left: 4px;
    padding-top: 20px;
}

.thumb {
    width: 11px;
    height: 150px;
    background: #858585;
}

/* toolbars */
.stage {
    flex: 1;
    min-width: 0;
    display: flex;
    flex-direction: column;
}

.toolbar {
    height: 30px;
    display: flex;
    align-items: center;
    padding-left: 9px;
    font-size: 13px;
    flex-shrink: 0;
    white-space: nowrap;
    overflow: hidden;
}

.grip {
    width: 8px;
    height: 20px;
    margin-right: 6px;
    background: radial-gradient(#bbb 1px, transparent 1px) 0 0 / 4px 4px;
}

.tool {
    width: 25px;
    height: 25px;
    display: flex;
    align-items: center;
    justify-content: center;
    flex-shrink: 0;
}

.wide {
    width: 36px;
    gap: 4px;
}

.green {
    background: #dff0df;
    margin-left: 6px;
}

.bar {
    width: 1px;
    height: 24px;
    background: #d2d2d6;
    margin: 0 3px;
}

.tool-text {
    display: flex;
    align-items: center;
    padding: 0 4px 0 5px;
}

.tool-text .caret {
    margin-left: 3px;
}

.mode {
    padding: 0 9px 0 4px;
}

.pad {
    padding-left: 11px;
}

.empty {
    padding: 0 5px 0 11px;
}

.end {
    border-width: 4px 4px 0;
    margin-left: 8px;
}

.word {
    padding: 0 4px;
}

/* 3D view */
.view {
    flex: 1;
    min-height: 0;
    position: relative;
    overflow: hidden;
    background: linear-gradient(#698de0, #fff);
    color: #111;
}

.legend {
    padding: 18px 17px;
    font-family: "DejaVu Sans", "Noto Sans CJK SC", sans-serif;
    font-size: 13px;
}

.legend p {
    margin: 0;
    height: 18px;
}

.legend .strong {
    font-weight: bold;
    font-size: 12px;
}

.bands {
    display: flex;
    margin-top: 18px;
    gap: 11px;
}

.band-colors {
    width: 19px;
    height: 183px;
    margin-top: 9px;
    border: 1px solid #222;
    display: flex;
    flex-direction: column;
}

.band-colors i {
    flex: 1;
    border-bottom: 1px solid #222;
}

.band-colors .c9 { border: 0; background: #0010fa; }
.c1 { background: #ff1f00; }
.c2 { background: #ffb000; }
.c3 { background: #fff700; }
.c4 { background: #b3ea00; }
.c5 { background: #00c80c; }
.c6 { background: #00e0ad; }
.c7 { background: #00eaff; }
.c8 { background: #00a2f5; }

.band-values {
    display: flex;
    flex-direction: column;
    justify-content: space-between;
    height: 198px;
}

.brand {
    position: absolute;
    right: 7px;
    top: 17px;
    color: #fff;
    text-align: right;
    font-weight: bold;
}

.brand-name {
    font-size: 43px;
    line-height: 50px;
}

.brand-version {
    font-size: 19px;
    line-height: 20px;
}

.beam {
    position: absolute;
    left: calc(50% - 284px);
    bottom: 119px;
    width: 710px;
    height: 213px;
}

.edges path {
    fill: none;
    stroke: #061018;
    stroke-width: 1px;
    vector-effect: non-scaling-stroke;
}

.ruler {
    position: absolute;
    left: calc(50% - 265px);
    bottom: 17px;
    width: 530px;
    font-family: "DejaVu Sans", sans-serif;
    font-size: 12px;
}

.ruler-top {
    display: flex;
    justify-content: space-between;
}

.ruler-top span {
    width: 0;
    display: flex;
    justify-content: center;
}

.ruler-top .unit {
    white-space: nowrap;
    width: 45px;
    margin-right: -45px;
}

.ruler-bar {
    height: 12px;
    border: 1px solid #222;
    display: flex;
}

.ruler-bar i {
    flex: 1;
}

.ruler-bar i:nth-child(odd) {
    background: #000;
}

.ruler-bar i:nth-child(even) {
    background: #fff;
}

.ruler-bottom {
    display: flex;
    justify-content: space-around;
    padding-top: 2px;
}

.triad {
    position: absolute;
    right: 97px;
    bottom: 77px;
    font-size: 13px;
}

/* graph and tabular data */
.bottom {
    height: 230px;
    display: flex;
    gap: 3px;
    padding-top: 4px;
    flex-shrink: 0;
}

.bottom .caption {
    height: 25px;
    border-top: 1px solid #d0d0d4;
}

.bottom .caption-name {
    padding-left: 5px;
}

.bottom .toolbar {
    height: 31px;
}

.graph {
    flex: 1;
    min-width: 0;
    display: flex;
    flex-direction: column;
}

.data {
    flex: 1;
    min-width: 0;
    display: flex;
    flex-direction: column;
}

.anim {
    width: 113px;
    height: 26px;
}

.cycles {
    width: 66px;
    height: 26px;
    border: 1px solid #ccc;
    background: #efeff2;
    color: #a8a8a8;
    padding: 0 3px;
}

.aa {
    font-size: 12px;
    font-weight: bold;
    padding: 0 7px 0 5px;
}

.chart {
    flex: 1;
    min-height: 0;
    background: #fff;
}

.chart svg {
    display: block;
    width: 100%;
    height: 100%;
}

.chart text {
    font-size: 15px;
    font-weight: bold;
    fill: #111;
}

.data-body {
    flex: 1;
    background: #9e9e9e;
}

.grid {
    width: 366px;
    table-layout: fixed;
    border-collapse: separate;
    border-spacing: 0;
    color: #222;
    background: #e9e8e6;
}

.grid .n {
    width: 21px;
}

.grid .t {
    width: 54px;
}

.grid th, .grid td {
    height: 20px;
    padding: 0 5px;
    font-weight: normal;
    text-align: left;
    white-space: nowrap;
    border-right: 1px solid #d6d5d2;
    border-bottom: 1px solid #c6c5c2;
}

.grid th {
    padding: 0 4px;
    background: #f1f1f1;
    border-right-color: #888;
    border-bottom-color: #888;
}

.grid label {
    display: flex;
    align-items: center;
    justify-content: space-between;
}

.grid input {
    appearance: none;
    width: 15px;
    height: 16px;
    background: #fff;
    border: solid #777;
    border-width: 2px 0 0 2px;
}

.grid input::before {
    content: "";
    display: block;
    width: 5px;
    height: 8px;
    margin: 0 4px;
    border: solid #000;
    border-width: 0 2px 2px 0;
    transform: rotate(40deg);
}

.red { color: #dc3030; }
.grn { color: #1f8c34; }
.blu { color: #2c24bb; }

/* status bar and taskbar */
.status {
    height: 25px;
    background: #0072cf;
    color: #fff;
    font-size: 13px;
    line-height: 25px;
    display: flex;
    justify-content: flex-end;
    padding-right: 8px;
    white-space: nowrap;
}

.message {
    display: flex;
    align-items: center;
    gap: 3px;
    margin-right: 20px;
}

.pick {
    margin-right: 32px;
}

.units {
    display: flex;
    align-items: center;
    gap: 6px;
    margin-right: 19px;
}

.up {
    border: 5px solid transparent;
    border-bottom-color: #fff;
    border-top: 0;
}

.unit-angle, .unit-rad {
    margin-right: 13px;
}

.taskbar {
    height: 53px;
    position: relative;
    display: flex;
    align-items: center;
    background: #dadada;
    border-top: 1px solid #b5d3ec;
}

.search {
    width: 209px;
    height: 33px;
    display: flex;
    align-items: center;
    background: #f6f6f6;
    border-radius: 0 17px 17px 0;
    padding: 0 5px;
    border-bottom: 1px solid #bbb;
}

.search input {
    flex: 1;
    min-width: 0;
    border: 0;
    background: none;
    font-size: 15px;
    padding: 0 1px;
}

.search ::placeholder {
    color: #666;
}

.apps {
    display: flex;
    gap: 7px;
    margin-left: 5px;
}

.app {
    position: relative;
    width: 43px;
    height: 44px;
    display: flex;
    align-items: center;
    justify-content: center;
}

.app text {
    fill: #fff;
    font-size: 11px;
    font-weight: bold;
}

.run::after, .on::after {
    content: "";
    position: absolute;
    bottom: 0;
    width: 6px;
    height: 4px;
    border-radius: 2px;
    background: #858585;
}

.on {
    background: #f1f1f1;
    border-radius: 4px;
}

.on::after {
    width: 18px;
    background: #1e70b5;
}

.badge {
    position: absolute;
    right: 4px;
    top: 2px;
    width: 18px;
    height: 20px;
    border-radius: 50%;
    background: #c0341f;
    color: #fff;
    line-height: 20px;
}

.tray {
    margin-left: auto;
    display: flex;
    align-items: center;
    padding-right: 21px;
    gap: 26px;
    color: #333;
}

.tray svg:nth-of-type(2) {
    margin-right: -6px;
}

.ime {
    font-size: 17px;
}

.tray-set {
    display: flex;
    gap: 8px;
}

.tray .tray-set svg {
    margin: 0;
}

.clock {
    display: flex;
    flex-direction: column;
    text-align: right;
    line-height: 18px;
    margin-right: -16px;
}

.stamp {
    position: absolute;
    right: 0;
    bottom: 0;
    width: 135px;
    height: 25px;
    background: rgba(40, 40, 40, 0.88);
    color: #fff;
    text-align: center;
    line-height: 25px;
}
```
